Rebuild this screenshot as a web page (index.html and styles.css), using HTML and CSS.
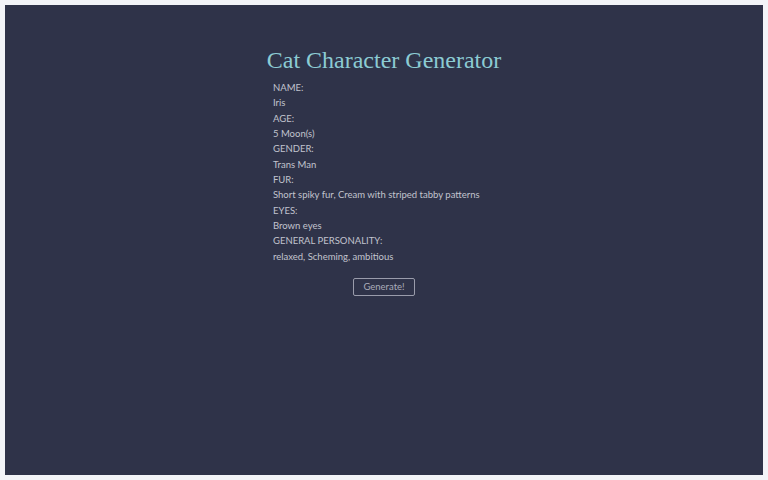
FILE: index.html
```html
<!DOCTYPE html>
<html lang="en">
<head>
    <meta charset="UTF-8">
    <meta name="viewport" content="width=device-width, initial-scale=1.0">
    <title>Cat Character Generator</title>
    <link rel="stylesheet" href="styles.css">
</head>
<body>
    <div class="app">
        <h1>Cat Character Generator</h1>

        <div class="ficha">
            <p class="rotulo">NAME:</p>
            <p>Iris</p>
            <p class="rotulo">AGE:</p>
            <p>5 Moon(s)</p>
            <p class="rotulo">GENDER:</p>
            <p>Trans Man</p>
            <p class="rotulo">FUR:</p>
            <p>Short spiky fur, Cream with striped tabby patterns</p>
            <p class="rotulo">EYES:</p>
            <p>Brown eyes</p>
            <p class="rotulo">GENERAL PERSONALITY:</p>
            <p>relaxed, Scheming, ambitious</p>
        </div>

        <button>Generate!</button>
    </div>
</body>
</html>
```

FILE: styles.css
```css
body {
    margin: 0;
    padding: 5px;
    background: #f3f4f8;
    font-family: Lato, "Noto Sans", sans-serif;
}
.app {
    height: 470px;
    background: #2f3349;
    display: flex;
    flex-direction: column;
    align-items: center;
}
h1 {
    margin: 41px 0 0;
    font-family: "Liberation Serif", serif;
    font-weight: normal;
    font-size: 24px;
    line-height: 28px;
    color: #8ccbd3;
    white-space: nowrap;
}
.ficha {
    width: 222px;
    margin-top: 6px;
    color: #c2c4ce;
    font-size: 9.5px;
    line-height: 15.35px;
}
.ficha p {
    margin: 0;
    white-space: nowrap;
}
button {
    margin-top: 14px;
    padding: 2px 9px 3px;
    background: transparent;
    border: 1px solid #9a9cab;
    border-radius: 2px;
    color: #a9abb9;
    font-family: Lato, "Noto Sans", sans-serif;
    font-size: 9.5px;
    line-height: 11px;
}
```
